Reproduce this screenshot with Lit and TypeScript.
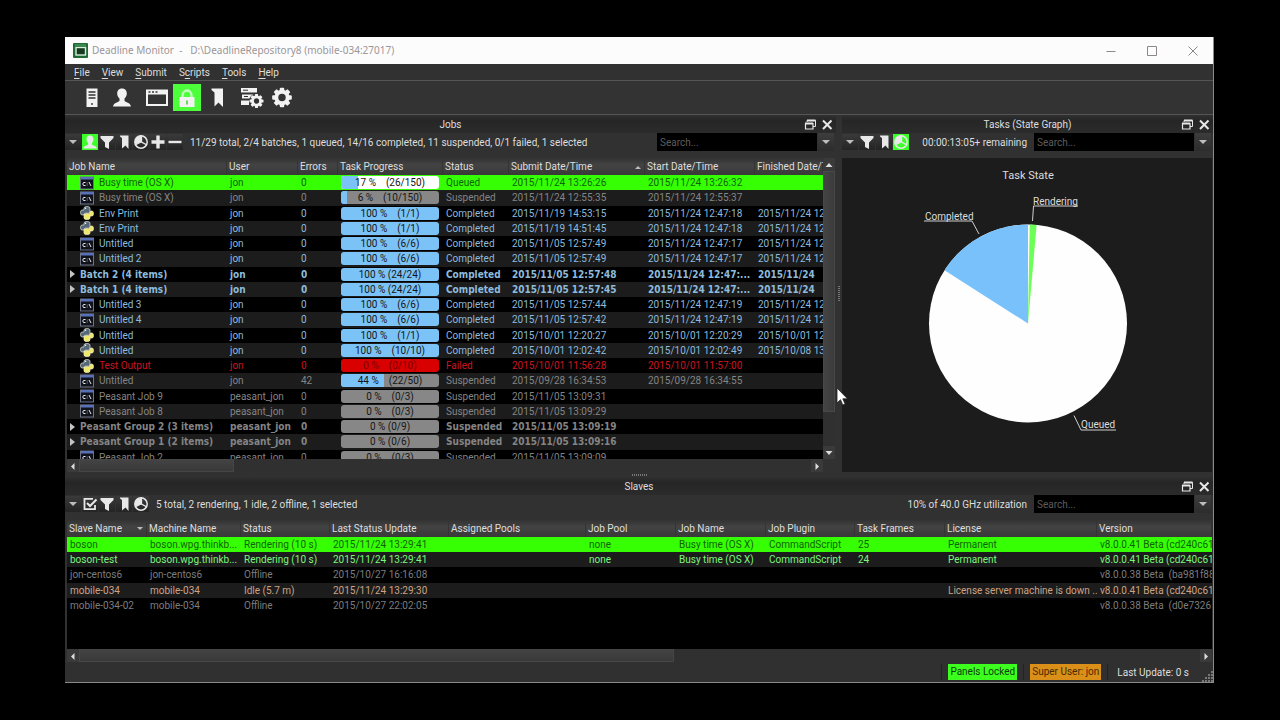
import { LitElement, html, css, svg, nothing } from "lit";
import { customElement, property } from "lit/decorators.js";
import { classMap } from "lit/directives/class-map.js";

type Kind = "queued" | "suspended" | "completed" | "failed";
interface Job {
  icon: "cmd" | "py" | "batch";
  name: string;
  user: string;
  errors: number;
  pct: number;
  frames: string;
  kind: Kind;
  submit: string;
  start?: string;
  finished?: string;
}

const job = (
  icon: Job["icon"], name: string, user: string, errors: number, pct: number,
  frames: string, kind: Kind, submit: string, start = "", finished = "",
): Job => ({ icon, name, user, errors, pct, frames, kind, submit, start, finished });

const JOBS: Job[] = [
  job("cmd", "Busy time (OS X)", "jon", 0, 17, "26/150", "queued", "2015/11/24 13:26:26", "2015/11/24 13:26:32"),
  job("cmd", "Busy time (OS X)", "jon", 0, 6, "10/150", "suspended", "2015/11/24 12:55:35", "2015/11/24 12:55:37"),
  job("py", "Env Print", "jon", 0, 100, "1/1", "completed", "2015/11/19 14:53:15", "2015/11/24 12:47:18", "2015/11/24 12"),
  job("py", "Env Print", "jon", 0, 100, "1/1", "completed", "2015/11/19 14:51:45", "2015/11/24 12:47:18", "2015/11/24 12"),
  job("cmd", "Untitled", "jon", 0, 100, "6/6", "completed", "2015/11/05 12:57:49", "2015/11/24 12:47:17", "2015/11/24 12"),
  job("cmd", "Untitled 2", "jon", 0, 100, "6/6", "completed", "2015/11/05 12:57:49", "2015/11/24 12:47:17", "2015/11/24 12"),
  job("batch", "Batch 2 (4 items)", "jon", 0, 100, "24/24", "completed", "2015/11/05 12:57:48", "2015/11/24 12:47:...", "2015/11/24"),
  job("batch", "Batch 1 (4 items)", "jon", 0, 100, "24/24", "completed", "2015/11/05 12:57:45", "2015/11/24 12:47:...", "2015/11/24"),
  job("cmd", "Untitled 3", "jon", 0, 100, "6/6", "completed", "2015/11/05 12:57:44", "2015/11/24 12:47:19", "2015/11/24 12"),
  job("cmd", "Untitled 4", "jon", 0, 100, "6/6", "completed", "2015/11/05 12:57:42", "2015/11/24 12:47:19", "2015/11/24 12"),
  job("py", "Untitled", "jon", 0, 100, "1/1", "completed", "2015/10/01 12:20:27", "2015/10/01 12:20:29", "2015/10/01 12"),
  job("py", "Untitled", "jon", 0, 100, "10/10", "completed", "2015/10/01 12:02:42", "2015/10/01 12:02:49", "2015/10/08 13"),
  job("py", "Test Output", "jon", 0, 0, "0/10", "failed", "2015/10/01 11:56:28", "2015/10/01 11:57:00"),
  job("cmd", "Untitled", "jon", 42, 44, "22/50", "suspended", "2015/09/28 16:34:53", "2015/09/28 16:34:55"),
  job("cmd", "Peasant Job 9", "peasant_jon", 0, 0, "0/3", "suspended", "2015/11/05 13:09:31"),
  job("cmd", "Peasant Job 8", "peasant_jon", 0, 0, "0/3", "suspended", "2015/11/05 13:09:29"),
  job("batch", "Peasant Group 2 (3 items)", "peasant_jon", 0, 0, "0/9", "suspended", "2015/11/05 13:09:19"),
  job("batch", "Peasant Group 1 (2 items)", "peasant_jon", 0, 0, "0/6", "suspended", "2015/11/05 13:09:16"),
  job("cmd", "Peasant Job 2", "peasant_jon", 0, 0, "0/3", "suspended", "2015/11/05 13:09:09"),
];

const JOB_COLS = ["Job Name", "User", "Errors", "Task Progress", "Status", "Submit Date/Time", "Start Date/Time", "Finished Date/T"];
const SLAVE_COLS = ["Slave Name", "Machine Name", "Status", "Last Status Update", "Assigned Pools", "Job Pool", "Job Name", "Job Plugin", "Task Frames", "License", "Version"];
const SLAVES: [string, string[]][] = [
  ["selected", ["boson", "boson.wpg.thinkb...", "Rendering (10 s)", "2015/11/24 13:29:41", "", "none", "Busy time (OS X)", "CommandScript", "25", "Permanent", "v8.0.0.41 Beta (cd240c61"]],
  ["rendering", ["boson-test", "boson.wpg.thinkb...", "Rendering (10 s)", "2015/11/24 13:29:41", "", "none", "Busy time (OS X)", "CommandScript", "24", "Permanent", "v8.0.0.41 Beta (cd240c61"]],
  ["offline", ["jon-centos6", "jon-centos6", "Offline", "2015/10/27 16:16:08", "", "", "", "", "", "", "v8.0.0.38 Beta  (ba981f88"]],
  ["idle", ["mobile-034", "mobile-034", "Idle (5.7 m)", "2015/11/24 13:29:30", "", "", "", "", "", "License server machine is down ...", "v8.0.0.41 Beta (cd240c61"]],
  ["offline", ["mobile-034-02", "mobile-034", "Offline", "2015/10/27 22:02:05", "", "", "", "", "", "", "v8.0.0.38 Beta  (d0e7326"]],
];

const gear = (cx: number, cy: number, s: number) => svg`
  <g transform="translate(${cx} ${cy}) scale(${s})">
    ${[0, 45, 90, 135, 180, 225, 270, 315].map((a) => svg`<rect x="-2.300" y="-10" width="4.600" height="5" rx="1" transform="rotate(${a})"/>`)}
    <circle r="5.800" fill="none" stroke="currentColor" stroke-width="4"/>
  </g>`;

const ICONS = {
  down: svg`<path d="M4 6h8l-4 4z" fill="#bdbdbd"/>`,
  user: svg`<path d="M8 1.500c2.300 0 3.500 1.700 3.500 3.700 0 1.600-.7 3-1.600 3.900v1.400c.6 1 4.600 1.200 5.100 4H1c.5-2.800 4.500-3 5.100-4V9.100C5.200 8.200 4.500 6.800 4.500 5.200c0-2 1.200-3.700 3.500-3.700z"/>`,
  filter: svg`<path d="M1.500 2h13v2L10 8.500V15l-4-2V8.500L1.500 4z"/>`,
  mark: svg`<path d="M4 1.500h8.500V15L9.500 11.500 6 14.500V4L4 2.500z"/>`,
  pie: svg`<circle cx="8" cy="8" r="6.200" fill="none" stroke="currentColor" stroke-width="1.500"/><path d="M8 8V2a6 6 0 0 0-5.500 8.500z"/><path d="M8.500 1.500V8l5.500 3M8 8l-6 3" fill="none" stroke="currentColor" stroke-width="1.300"/>`,
  plus: svg`<path d="M6.300 1.500h3.400v4.800h4.800v3.400H9.700v4.800H6.300V9.700H1.500V6.300h4.800z"/>`,
  minus: svg`<path d="M1.500 6.800h13v2.400h-13z"/>`,
  check: svg`<path d="M11 2.800H2.500v10.400h10.500V9" fill="none" stroke="currentColor" stroke-width="1.800"/><path d="M5 7l3 3 6.500-6.500" fill="none" stroke="currentColor" stroke-width="2"/>`,
  float: svg`<path d="M5 6V4.500h8.500v6H11" fill="none" stroke="currentColor" stroke-width="1"/><path d="M5 4.500h8.500M3 7.500h8" stroke="currentColor" stroke-width="1.800"/><path d="M3.500 7.500h7.500v5.500H3.500z" fill="none" stroke="currentColor" stroke-width="1.200"/>`,
  close: svg`<path d="M4 4.500l8.500 8.500M12.500 4.500L4 13" stroke="currentColor" stroke-width="2"/>`,
};
type IconName = keyof typeof ICONS;

const glyph = (name: IconName) => html`<svg class="glyph" viewBox="0 0 16 16" aria-hidden="true">${ICONS[name]}</svg>`;

const fileIcon = (kind: Job["icon"]) => kind === "cmd"
  ? html`<svg class="file" viewBox="0 0 14 14" aria-hidden="true"><rect x=".5" y="1" width="13" height="12" fill="#10131c" stroke="#6d7385"/><rect x="1" y="1" width="12" height="2.500" fill="#5871b8"/><path d="M5.500 6.500H3.500L3 7v2l.5.5h2M7.200 6.800v.6M7.200 8.700v.6M9 6l2 4" fill="none" stroke="#e8e8e8"/></svg>`
  : html`<svg class="file" viewBox="0 0 14 14" aria-hidden="true"><path d="M4 4V2Q4 .5 7 .5t3 1.500V6Q10 7.200 8.500 7.200H5.500Q4 7.200 4 9H2Q.5 9 .5 6.500T2 4z" fill="#56677a" stroke="#e3e6d8" stroke-width=".7"/><path d="M10 10v2q0 1.500-3 1.500T4 12V9q0-1.300 1.500-1.300h3Q10.500 7.700 10.500 5H12q1.500 0 1.500 2.500T12 10z" fill="#efe768" stroke="#f5f3c4" stroke-width=".7"/><circle cx="5.600" cy="2.300" r=".7" fill="#fff"/></svg>`;

const base = css`
  * { box-sizing: border-box; }
  button { font: inherit; color: inherit; background: none; border: 0; padding: 0; margin: 0; }
  .glyph { display: block; width: 16px; height: 16px; fill: currentColor; color: #e8e8e8; }
`;

/* A docked panel: caption, tool row, then the slotted content. */
@customElement("dock-panel")
class DockPanel extends LitElement {
  @property() caption = "";
  @property() summary = "";
  @property() active = "";
  @property({ type: Boolean }) trailing = false;
  @property({ type: Array }) tools: IconName[] = [];

  static styles = [base, css`
    :host { display: flex; flex-direction: column; min-width: 0; min-height: 0; }
    .caption { display: flex; align-items: center; height: 18px; flex: none; background: linear-gradient(#303030, #262626 30%, #2b2b2b); }
    h2 { flex: 1; margin: 0; padding-left: 34px; font-size: 10px; font-weight: 400; text-align: center; }
    .caption button { width: 17px; }
    .row { display: flex; align-items: center; gap: 1px; height: 18px; flex: none; margin-bottom: 7px; padding-right: 2px; }
    .tool { width: 16px; height: 16px; background: linear-gradient(#3a3a3a, #242424); }
    .tool.on { background: #3cff2a; }
    .summary { flex: 1; margin: 0 6px; white-space: nowrap; }
    .summary.trailing { text-align: right; }
    .search { display: flex; flex: none; gap: 1px; }
    input { width: 160px; height: 18px; border: 0; padding: 0 3px; background: #000; color: #ddd; font: inherit; outline: 0; }
    input::placeholder { color: #5c5c5c; opacity: 1; }
    .more { width: 16px; height: 18px; background: linear-gradient(#3d3d3d, #2c2c2c); }
    .body { flex: 1; min-height: 0; display: flex; flex-direction: column; }
  `];

  render() {
    return html`
      <header class="caption">
        <h2>${this.caption}</h2>
        <button aria-label="Float ${this.caption}">${glyph("float")}</button>
        <button aria-label="Close ${this.caption}">${glyph("close")}</button>
      </header>
      <div class="row">
        ${this.tools.map((t) => html`<button class=${classMap({ tool: true, on: t === this.active })} aria-label=${t}>${glyph(t)}</button>`)}
        <span class=${classMap({ summary: true, trailing: this.trailing })}><slot name="summary">${this.summary}</slot></span>
        <div class="search">
          <input type="search" placeholder="Search..." aria-label="Search ${this.caption}">
          <button class="more" aria-label="Search options">${glyph("down")}</button>
        </div>
      </div>
      <div class="body"><slot></slot></div>`;
  }
}

@customElement("task-graph")
class TaskGraph extends LitElement {
  static styles = css`
    :host { display: block; flex: 1; min-height: 0; margin-right: 1px; background: #1c1c1c; }
    svg { display: block; width: 100%; height: 100%; }
    text { fill: #dcdcdc; font-size: 10px; }
    .title { font-size: 11px; text-anchor: middle; }
    .leader { fill: none; stroke: #cfcfcf; stroke-width: 1; }
  `;

  render() {
    const cx = 186, cy = 165, r = 99;
    const at = (deg: number) => {
      const a = ((deg - 90) * Math.PI) / 180;
      return `${(cx + r * Math.cos(a)).toFixed(1)} ${(cy + r * Math.sin(a)).toFixed(1)}`;
    };
    const wedge = (from: number, to: number) => `M${cx} ${cy}L${at(from)}A${r} ${r} 0 0 1 ${at(to)}z`;
    return html`<svg viewBox="0 0 370 313" role="img" aria-label="Task State">
      <text class="title" x="186" y="20">Task State</text>
      <circle cx=${cx} cy=${cy} r=${r} fill="#fefefe"/>
      <path d=${wedge(302.5, 360)} fill="#78c1fa"/>
      <path d=${wedge(1, 5)} fill="#6bff57"/>
      <path class="leader" d="M82 62.500h48l7 13M236 47.500h-44.500l-1 15M232 257l7 14.500h35"/>
      <text x="83" y="61">Completed</text>
      <text x="191" y="46">Rendering</text>
      <text x="239" y="269">Queued</text>
    </svg>`;
  }
}

@customElement("app-root")
class AppRoot extends LitElement {
  static styles = [base, css`
    :host { display: block; height: 100vh; box-sizing: border-box; padding: 37px 66px 37px 65px; background: #000; color: #dedede; font: 10px/15px Roboto, "DejaVu Sans Condensed", sans-serif; }
    .window { display: flex; flex-direction: column; height: 100%; background: #313131; border-right: 1px solid #8a8a8a; border-bottom: 1px solid #8a8a8a; }
    .titlebar { display: flex; align-items: center; height: 27px; flex: none; padding: 0 12px 0 8px; background: #fdfcfd; color: #9a9699; font-family: "Noto Sans", sans-serif; white-space: pre; }
    .titlebar h1 { flex: 1; margin: 0 0 0 4px; font-size: 10px; font-weight: 400; }
    .logo { width: 15px; height: 15px; }
    .controls { display: flex; gap: 25px; }
    .controls svg { display: block; width: 16px; height: 16px; fill: none; stroke: #8c8789; }
    .menu { display: flex; gap: 12px; height: 17px; flex: none; padding-left: 9px; border-bottom: 1px solid #555; }
    .menu u { text-underline-offset: 2px; }
    .toolbar { display: flex; align-items: center; gap: 7px; height: 34px; flex: none; padding-left: 5px; border-bottom: 1px solid #555; background: #333; }
    .grip { width: 4px; height: 16px; margin-right: -6px; background: radial-gradient(#777 30%, transparent 40%) 0 0 / 2px 2px; }
    .group { display: flex; gap: 2px; }
    .group:first-of-type { margin-left: 3px; }
    .big { width: 28px; height: 27px; color: #f2f2f2; }
    .big svg { display: block; margin: 1px 2px; width: 24px; height: 24px; fill: currentColor; }
    .big.on { background: #4dff3a; }
    .docks { flex: 1; min-height: 0; display: grid; grid-template-rows: minmax(0, 357fr) 5px minmax(0, 185fr); }
    .upper { display: grid; grid-template-columns: minmax(0, 771fr) 6px minmax(0, 371fr); }
    .vsplit, .hsplit { display: grid; place-items: center; }
    .vsplit::after { content: ""; width: 2px; height: 15px; background: repeating-linear-gradient(#777 0 1px, transparent 1px 2px); }
    .hsplit::after { content: ""; width: 15px; height: 2px; background: repeating-linear-gradient(90deg, #777 0 1px, transparent 1px 2px); }
    .scroller { flex: 1; min-height: 0; display: grid; grid-template: minmax(0, 1fr) 13px / minmax(0, 1fr) 12px; margin: 0 1px 0 2px; }
    .scroller.wide { grid-template-columns: minmax(0, 1fr); }
    .counts { display: flex; justify-content: space-between; }
    .view { overflow: hidden; background: #000; }
    table { width: 100%; table-layout: fixed; border-collapse: collapse; }
    .jobs { height: 307px; }
    .slaves { height: 93px; }
    th { height: 17px; padding: 0 0 0 2px; font-weight: 400; text-align: left; line-height: 15px; white-space: nowrap; overflow: hidden; background: linear-gradient(#333, #434343 40%, #393939); box-shadow: inset -1px 0 #343434; }
    .sorted { display: flex; justify-content: space-between; align-items: center; padding-right: 3px; }
    .sorted svg { width: 8px; height: 8px; fill: #bbb; }
    td { padding: 0 0 0 3px; line-height: 15px; white-space: pre; overflow: hidden; }
    tbody tr:nth-child(even) { background: #1c1c1c; }
    .suspended td { color: #848484; }
    tbody .queued, tbody .selected { background: #36ff04; }
    .queued td, .selected td { color: #0f6408; }
    .completed td { color: #8dbbdc; }
    .failed td { color: #cc1420; }
    .rendering td { color: #7cf57c; }
    .offline td { color: #7d7d7d; }
    .idle td { color: #cda384; }
    .batch td { font-weight: 700; font-family: "DejaVu Sans Condensed", "DejaVu Sans", sans-serif; }
    .name { display: flex; align-items: center; height: 15px; }
    .twist { width: 10px; flex: none; }
    .twist svg { display: block; width: 8px; height: 10px; fill: #c4c4c4; }
    .file { width: 14px; height: 14px; flex: none; margin-right: 5px; }
    .bar { position: relative; height: 13px; width: 98px; border-radius: 3px; overflow: hidden; background: #878787; font-family: Roboto, sans-serif; }
    .queued .bar { background: #fff; }
    .failed .bar { background: #d80000; }
    .fill { height: 100%; background: #7bc3f7; }
    .label { position: absolute; inset: 0; text-align: center; font-weight: 400; line-height: 13px; color: #161616; }
    .failed .label { color: #780000; }
    .vbar { display: flex; flex-direction: column; background: #303030; }
    .hbar { display: flex; background: #303030; }
    .arrow { width: 12px; height: 13px; flex: none; background: #3a3a3a; }
    .arrow svg { display: block; width: 12px; height: 12px; fill: #dcdcdc; }
    .vthumb { flex: 90; background: linear-gradient(90deg, #444, #3b3b3b); border: 1px solid #484848; }
    .vrest { flex: 13; }
    .hthumb { background: linear-gradient(#434343, #393939); border: 1px solid #464646; }
    .t21 { flex: 21; } .r79 { flex: 79; } .t53 { flex: 53; } .r47 { flex: 47; }
    .status { display: flex; align-items: center; justify-content: flex-end; height: 20px; flex: none; background: #303030; }
    .badge { height: 16px; padding: 0 2px; margin-right: 6px; color: #0c400c; background: #3cff1e; }
    .badge.super { background: #da9018; color: #4a2a00; }
    .rule { width: 1px; height: 16px; margin-right: 6px; background: #222; }
    .update { margin: 0 12px 0 3px; }
    .size { width: 12px; height: 12px; align-self: flex-end; fill: #777; }
    .cursor { position: absolute; left: 836px; top: 387px; width: 12px; height: 19px; }
  `];

  private arrow(d: string, label: string) {
    return html`<button class="arrow" aria-label=${label}><svg viewBox="0 0 12 12"><path d=${d}/></svg></button>`;
  }

  private hbar(thumb: string, rest: string) {
    return html`<div class="hbar">
      ${this.arrow("M7.500 3v7L4 6.500z", "Scroll left")}
      <div class="hthumb ${thumb}"></div><div class=${rest}></div>
      ${this.arrow("M4.500 3v7L8 6.500z", "Scroll right")}
    </div>`;
  }

  private head(cols: string[], widths: number[], sort: number, path: string) {
    return html`
      <colgroup>${cols.map((_, i) => html`<col style=${widths[i] ? `width:${widths[i]}px` : nothing}>`)}</colgroup>
      <thead><tr>${cols.map((c, i) => html`<th scope="col">${i === sort
        ? html`<div class="sorted">${c}<svg viewBox="0 0 8 8"><path d=${path}/></svg></div>` : c}</th>`)}</tr></thead>`;
  }

  private jobRow(j: Job) {
    const batch = j.icon === "batch";
    return html`<tr class="${j.kind} ${j.icon}">
      <td><div class="name"><span class="twist">${batch ? html`<svg viewBox="0 0 8 10"><path d="M0 1v8l5-4z"/></svg>` : nothing}</span>${batch ? nothing : fileIcon(j.icon)}${j.name}</div></td>
      <td>${j.user}</td>
      <td>${j.errors}</td>
      <td><div class="bar" role="progressbar" aria-valuenow=${j.pct}><div class="fill" style="width:${j.pct}%"></div><span class="label">${j.pct} %${batch ? " " : "    "}(${j.frames})</span></div></td>
      <td>${j.kind[0].toUpperCase() + j.kind.slice(1)}</td>
      <td>${j.submit}</td><td>${j.start}</td><td>${j.finished}</td>
    </tr>`;
  }

  private toolbar() {
    return html`<div class="toolbar" role="toolbar">
      <span class="grip"></span>
      <div class="group">
        <button class="big" aria-label="Slaves"><svg viewBox="0 0 24 24"><path d="M6.500 2.500h11v18.500h-11z"/><path d="M8.500 6h7M8.500 9h7M8.500 12h7" stroke="#333" stroke-width="1.300"/><circle cx="12" cy="18" r=".9" fill="#333"/></svg></button>
        <button class="big" aria-label="User"><svg viewBox="0 0 24 24"><path d="M12 2.500c3.300 0 4.800 2.200 4.800 5 0 2-.9 3.800-2.300 5v2.200c.8 1.600 5.800 1.500 6.500 5.800H3c.7-4.300 5.700-4.200 6.500-5.800v-2.200c-1.400-1.200-2.300-3-2.300-5 0-2.800 1.500-5 4.800-5z"/></svg></button>
      </div>
      <div class="group">
        <button class="big" aria-label="Panels"><svg viewBox="0 0 24 24"><path fill-rule="evenodd" d="M1 3.500h22v16.500H1zM3 8.500v9.500h18V8.500z"/><path d="M3.500 6h2M7 6h2M10.500 6h2" stroke="#333" stroke-width="1.500"/></svg></button>
        <button class="big on" aria-label="Lock panels"><svg viewBox="0 0 24 24"><path d="M7.500 12V9.500a4.500 5 0 0 1 9 0V12" fill="none" stroke="#c5ffc0" stroke-width="2.300"/><rect x="4.500" y="11" width="15" height="10"/><path d="M12 14.500v4" stroke="#55d845" stroke-width="1.800"/></svg></button>
        <button class="big" aria-label="Pinned layouts"><svg viewBox="0 0 24 24"><path d="M6.500 2.500H18V21l-4.500-4.500-4 4V6.500l-3-2.500z"/></svg></button>
      </div>
      <div class="group">
        <button class="big" aria-label="Repository options"><svg viewBox="0 0 24 24"><rect x="1" y="2" width="16" height="4.500"/><rect x="2" y="8.500" width="12" height="4"/><rect x="1" y="14.500" width="8" height="4.500"/><path d="M3 4.200h5M4 10.500h4" stroke="#333"/><circle cx="16.500" cy="15" r="7.500" fill="#333"/>${gear(16.5, 15, 0.7)}</svg></button>
        <button class="big" aria-label="Options"><svg viewBox="0 0 24 24">${gear(12, 11.5, 0.98)}</svg></button>
      </div>
    </div>`;
  }

  render() {
    return html`<main class="window">
      <header class="titlebar"><svg class="logo" viewBox="0 0 15 15" aria-hidden="true"><rect width="15" height="15" rx="1" fill="#1f6a35"/><rect x="3" y="4.500" width="9.500" height="7.500" fill="#17391f" stroke="#d8f0da" stroke-width="1.400"/><path d="M2 2h11" stroke="#5ba96c"/></svg>
        <h1>Deadline Monitor  -   D:\\DeadlineRepository8 (mobile-034:27017)</h1>
        <div class="controls"><button aria-label="Minimize"><svg viewBox="0 0 16 16"><path d="M3.500 8.500h9"/></svg></button><button aria-label="Maximize"><svg viewBox="0 0 16 16"><path d="M3.500 3.500h9v9h-9z"/></svg></button><button aria-label="Close"><svg viewBox="0 0 16 16"><path d="M3.500 3.500l9 9M12.500 3.500l-9 9"/></svg></button></div>
      </header>
      <nav class="menu">
        <button><u>F</u>ile</button><button><u>V</u>iew</button><button><u>S</u>ubmit</button><button>S<u>c</u>ripts</button><button><u>T</u>ools</button><button><u>H</u>elp</button>
      </nav>
      ${this.toolbar()}
      <div class="docks">
        <div class="upper">
          <dock-panel caption="Jobs" active="user" .tools=${["down", "user", "filter", "mark", "pie", "plus", "minus"]}
            summary="11/29 total, 2/4 batches, 1 queued, 14/16 completed, 11 suspended, 0/1 failed, 1 selected">
            <div class="scroller">
              <div class="view"><table class="jobs">
                ${this.head(JOB_COLS, [160, 71, 40, 105, 66, 136, 110, 0], 5, "M1 6h6L4 3z")}
                <tbody>${JOBS.map((j) => this.jobRow(j))}</tbody>
              </table></div>
              <div class="vbar">${this.arrow("M2.500 8h7L6 4z", "Scroll up")}<div class="vthumb"></div><div class="vrest"></div>${this.arrow("M2.500 4h7L6 8z", "Scroll down")}</div>
              ${this.hbar("t21", "r79")}
            </div>
          </dock-panel>
          <div class="vsplit"></div>
          <dock-panel caption="Tasks (State Graph)" active="pie" trailing summary="00:00:13:05+ remaining" .tools=${["down", "filter", "mark", "pie"]}>
            <task-graph></task-graph>
          </dock-panel>
        </div>
        <div class="hsplit"></div>
        <dock-panel caption="Slaves" .tools=${["down", "check", "filter", "mark", "pie"]}>
          <div slot="summary" class="counts"><span>5 total, 2 rendering, 1 idle, 2 offline, 1 selected</span><span>10% of 40.0 GHz utilization</span></div>
          <div class="scroller wide">
            <div class="view"><table class="slaves">
              ${this.head(SLAVE_COLS, [80, 94, 89, 119, 137, 90, 90, 89, 90, 152, 0], 0, "M1 2h6L4 5z")}
              <tbody>${SLAVES.map(([k, cells]) => html`<tr class=${k}>${cells.map((c) => html`<td>${c}</td>`)}</tr>`)}</tbody>
            </table></div>
            ${this.hbar("t53", "r47")}
          </div>
        </dock-panel>
      </div>
      <footer class="status">
        <span class="rule"></span><span class="badge">Panels Locked</span>
        <span class="rule"></span><span class="badge super">Super User: jon</span>
        <span class="rule"></span><span class="update">Last Update: 0 s</span>
        <svg class="size" viewBox="0 0 12 12" aria-hidden="true">${[2, 5, 8, 11].map((x) => [2, 5, 8, 11].filter((y) => x + y >= 12).map((y) => svg`<rect x=${x - 1} y=${y - 1} width="2" height="2"/>`))}</svg>
      </footer>
      <svg class="cursor" viewBox="0 0 12 19" aria-hidden="true"><path d="M1 1v15l3.500-3.300 2.300 5.300 2.300-1-2.300-5.200h4.700z" fill="#fff" stroke="#222" stroke-width=".8"/></svg>
    </main>`;
  }
}
